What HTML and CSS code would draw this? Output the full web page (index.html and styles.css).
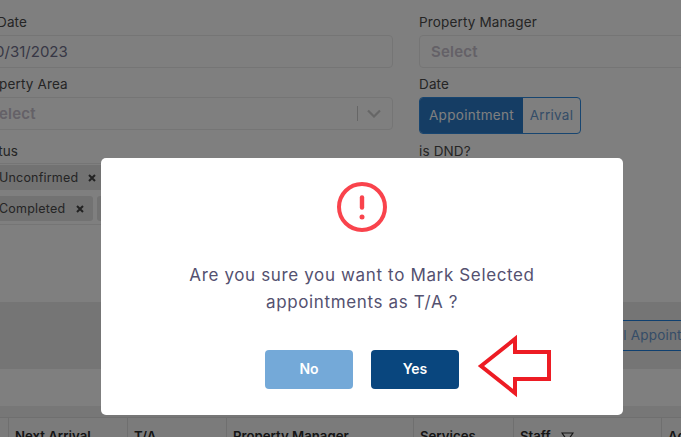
FILE: index.html
```html
<!DOCTYPE html>
<html lang="en">
<head>
<meta charset="utf-8">
<title>Mark appointments</title>
<link rel="stylesheet" href="styles.css">
</head>
<body>
<div class="page">
  <section class="filters">
    <div class="col">
      <div class="field field-date">
        <label>To Date</label>
        <div class="input value">10/31/2023</div>
      </div>
      <div class="field field-area">
        <label>Property Area</label>
        <div class="input select">
          <span class="placeholder">Select</span>
          <span class="sep"></span>
          <svg class="chev" width="14" height="9" viewBox="0 0 14 9"><path d="M1 1.500l6 6 6-6" fill="none" stroke="currentColor" stroke-width="2.200"/></svg>
        </div>
      </div>
      <div class="field">
        <label>Status</label>
        <div class="tags">
          <div class="tag-row">
            <div class="tag tag-first">Unconfirmed <svg class="x" width="8" height="8" viewBox="0 0 8 8"><path d="M1 1l6 6M7 1L1 7" stroke="currentColor" stroke-width="2"/></svg></div>
          </div>
          <div class="tag-row">
            <div class="tag">Completed <svg class="x" width="8" height="8" viewBox="0 0 8 8"><path d="M1 1l6 6M7 1L1 7" stroke="currentColor" stroke-width="2"/></svg></div>
            <div class="tag">Cancelled</div>
          </div>
        </div>
      </div>
    </div>
    <div class="col col-right">
      <div class="field field-date">
        <label>Property Manager</label>
        <div class="input"><span class="placeholder">Select</span></div>
      </div>
      <div class="field field-area">
        <label>Date</label>
        <div class="toggle"><span class="on">Appointment</span><span class="off">Arrival</span></div>
      </div>
      <div class="field"><label>is DND?</label></div>
    </div>
  </section>
  <section class="band">
    <div class="band-btn">Mark All Appointments</div>
  </section>
  <section class="gap-strip"></section>
  <section class="strip"></section>
  <section class="thead">
    <div class="th th-0"></div>
    <div class="th th-a">Next Arrival</div>
    <div class="th th-b">T/A</div>
    <div class="th th-c">Property Manager</div>
    <div class="th th-d">Services</div>
    <div class="th th-e">Staff <svg class="funnel" width="13" height="10" viewBox="0 0 13 10"><path d="M1 1h11L6.500 9z" fill="none" stroke="currentColor" stroke-width="1.200"/></svg></div>
    <div class="th th-f">Actions</div>
  </section>
</div>
<div class="overlay"></div>
<div class="modal">
  <svg class="alert" width="52" height="52" viewBox="0 0 52 52">
    <circle cx="26" cy="26" r="23" fill="none" stroke="#f9434c" stroke-width="4"/>
    <path d="M26 16.500v10" stroke="#f9434c" stroke-width="4.400" stroke-linecap="round"/>
    <circle cx="26" cy="36" r="2.500" fill="#f9434c"/>
  </svg>
  <p class="msg">Are you sure you want to Mark Selected<br>appointments as T/A ?</p>
  <div class="actions">
    <div class="btn btn-no">No</div>
    <div class="btn btn-yes">Yes</div>
  </div>
</div>
<svg class="arrow" width="76" height="64" viewBox="0 0 76 64">
  <path d="M4 32L38 5v13h34v27H38v14z" fill="none" stroke="#ed1c24" stroke-width="4" stroke-linejoin="miter"/>
</svg>
</body>
</html>
```
FILE: styles.css
```css
html, body { margin: 0; padding: 0; width: 681px; height: 437px; overflow: hidden; background: #fff; }
body { position: relative; font-family: "Inter", "Noto Sans", sans-serif; color: #333; }
.page { width: 800px; margin-left: -23px; height: 437px; overflow: hidden; }
.filters { display: flex; gap: 26px; height: 302px; padding-top: 12px; box-sizing: border-box; }
.col { width: 416px; flex: none; }
.col-right { width: 330px; }
.field label { display: block; font-size: 13.500px; line-height: 20px; letter-spacing: .15px; color: #4a4a4a; }
.field-date { height: 62px; }
.field-area { height: 67px; }
.input { box-sizing: border-box; height: 33px; border: 1px solid #eaeaea; border-radius: 4px; margin-top: 3px; padding: 0 11px; font-size: 15px; letter-spacing: 0; display: flex; align-items: center; color: #70708c; }
.placeholder { color: #c8c2ce; font-weight: 600; letter-spacing: .2px; }
.select .placeholder { flex: 1; }
.sep { width: 1px; height: 15px; background: #ccc; margin-right: 9px; }
.chev { color: #ccc; }
.toggle { display: inline-flex; margin-top: 3px; height: 37px; border: 1px solid #2f8ae0; border-radius: 4px; font-size: 13.500px; letter-spacing: .3px; line-height: 35px; box-sizing: border-box; overflow: hidden; }
.on { background: #2a7ac8; color: #fff; width: 103px; text-align: center; }
.off { color: #6a9ad0; width: 57px; text-align: center; }
.tags { width: 416px; margin-top: 2px; border-top: 1px solid #eaeaea; border-bottom: 1px solid #eaeaea; padding: 1px 0 2px 13px; display: flex; flex-direction: column; gap: 6px; box-sizing: border-box; height: 62px; }
.tag-row { display: flex; gap: 4px; }
.tag { background: #e4e4e4; border-radius: 3px; height: 25px; line-height: 25px; padding: 0 9px; font-size: 12.500px; letter-spacing: .2px; color: #4a4a4a; display: flex; align-items: center; gap: 11px; }
.tag-first { gap: 10px; }
.x { color: #444; }
.band { height: 67px; background: #eaeaea; box-sizing: border-box; padding: 18px 0 0 586px; }
.band-btn { font-size: 13.500px; letter-spacing: .2px; color: #6a9ad0; border: 1px solid #1e80e0; border-width: 1px 0; height: 31px; line-height: 29px; box-sizing: border-box; padding: 0 10px; white-space: nowrap; width: 220px; }
.gap-strip { height: 37px; background: #fefefe; }
.strip { height: 11px; background: #eeeeee; }
.thead { display: flex; border-top: 1px solid #dedede; font-size: 13.200px; font-weight: 600; color: #2a2a2a; height: 30px; background: #f7f7f7; }
.th { box-sizing: border-box; border-right: 1px solid #dedede; padding: 10px 0 0 6px; white-space: nowrap; flex: none; }
.th-0 { width: 32px; }
.th-a { width: 119px; }
.th-b { width: 99px; }
.th-c { width: 187px; }
.th-d { width: 100px; }
.th-e { width: 148px; }
.funnel { margin-left: 7px; vertical-align: -1px; }
.overlay { position: absolute; inset: 0; background: rgba(0,0,0,.5); }
.modal { position: absolute; left: 101px; top: 158px; width: 522px; height: 257px; background: #fff; border-radius: 5px; text-align: center; box-sizing: border-box; padding-top: 23px; }
.alert { display: block; margin: 0 auto; }
.msg { margin: 29px 0 0; font-size: 17px; line-height: 27px; letter-spacing: .64px; color: #545170; }
.actions { display: flex; justify-content: center; gap: 18px; margin-top: 34px; }
.btn { width: 88px; height: 39px; border-radius: 4px; color: #fff; font-size: 14px; font-weight: 600; line-height: 38px; }
.btn-no { background: #74a9d8; }
.btn-yes { background: #09467e; }
.arrow { position: absolute; left: 477px; top: 334px; }
```
